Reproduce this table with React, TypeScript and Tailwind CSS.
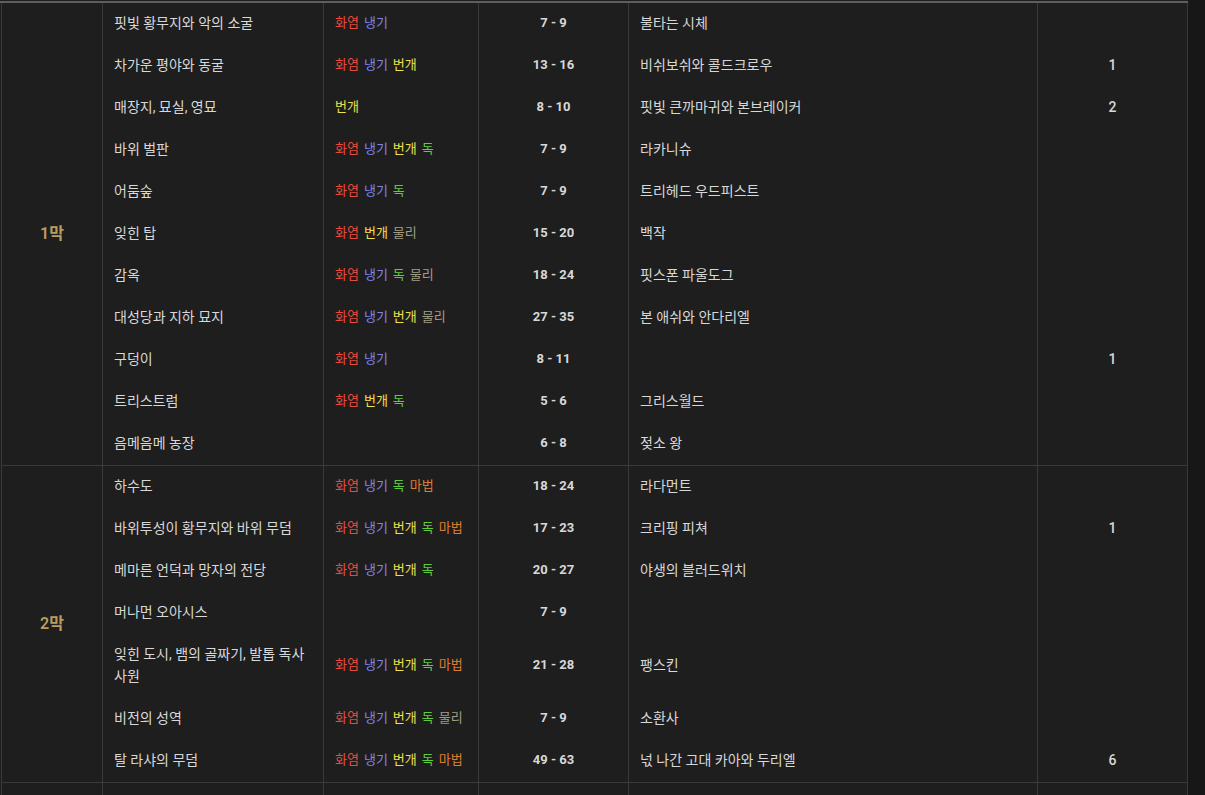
import React from "react";

type Row = { name: string; el: string[]; lv: string; boss: string; n: string };

const EL: Record<string, string> = {
  화염: "text-[#ea4a3c]",
  냉기: "text-[#7f86ea]",
  번개: "text-[#f4e04e]",
  독: "text-[#5fcc3c]",
  마법: "text-[#de7c2e]",
  물리: "text-[#a29c86]",
};

const g1: Row[] = [
  { name: "핏빛 황무지와 악의 소굴", el: ["화염", "냉기"], lv: "7 - 9", boss: "불타는 시체", n: "" },
  { name: "차가운 평야와 동굴", el: ["화염", "냉기", "번개"], lv: "13 - 16", boss: "비쉬보쉬와 콜드크로우", n: "1" },
  { name: "매장지, 묘실, 영묘", el: ["번개"], lv: "8 - 10", boss: "핏빛 큰까마귀와 본브레이커", n: "2" },
  { name: "바위 벌판", el: ["화염", "냉기", "번개", "독"], lv: "7 - 9", boss: "라카니슈", n: "" },
  { name: "어둠숲", el: ["화염", "냉기", "독"], lv: "7 - 9", boss: "트리헤드 우드피스트", n: "" },
  { name: "잊힌 탑", el: ["화염", "번개", "물리"], lv: "15 - 20", boss: "백작", n: "" },
  { name: "감옥", el: ["화염", "냉기", "독", "물리"], lv: "18 - 24", boss: "핏스폰 파울도그", n: "" },
  { name: "대성당과 지하 묘지", el: ["화염", "냉기", "번개", "물리"], lv: "27 - 35", boss: "본 애쉬와 안다리엘", n: "" },
  { name: "구덩이", el: ["화염", "냉기"], lv: "8 - 11", boss: "", n: "1" },
  { name: "트리스트럼", el: ["화염", "번개", "독"], lv: "5 - 6", boss: "그리스월드", n: "" },
  { name: "음메음메 농장", el: [], lv: "6 - 8", boss: "젖소 왕", n: "" },
];

const g2: Row[] = [
  { name: "하수도", el: ["화염", "냉기", "독", "마법"], lv: "18 - 24", boss: "라다먼트", n: "" },
  { name: "바위투성이 황무지와 바위 무덤", el: ["화염", "냉기", "번개", "독", "마법"], lv: "17 - 23", boss: "크리핑 피쳐", n: "1" },
  { name: "메마른 언덕과 망자의 전당", el: ["화염", "냉기", "번개", "독"], lv: "20 - 27", boss: "야생의 블러드위치", n: "" },
  { name: "머나먼 오아시스", el: [], lv: "7 - 9", boss: "", n: "" },
  { name: "잊힌 도시, 뱀의 골짜기, 발톱 독사 사원", el: ["화염", "냉기", "번개", "독", "마법"], lv: "21 - 28", boss: "팽스킨", n: "" },
  { name: "비전의 성역", el: ["화염", "냉기", "번개", "독", "물리"], lv: "7 - 9", boss: "소환사", n: "" },
  { name: "탈 라샤의 무덤", el: ["화염", "냉기", "번개", "독", "마법"], lv: "49 - 63", boss: "넋 나간 고대 카아와 두리엘", n: "6" },
];

const FONT = { fontFamily: "Roboto, 'Noto Sans CJK KR', sans-serif" };

function Group({ act, rows }: { act: string; rows: Row[] }) {
  return (
    <>
      {rows.map((r, i) => {
        const last = i === rows.length - 1;
        const b = last ? "border-b border-b-[#3a3a3a]" : "";
        return (
          <tr key={i}>
            {i === 0 && (
              <td
                rowSpan={rows.length}
                className="border-x border-[#3a3a3a] border-b border-b-[#3a3a3a] text-center align-middle text-[16px] font-semibold text-[#b99d5f]"
              >
                {act}
              </td>
            )}
            <td className={`border-x border-[#3a3a3a] ${b} pl-[11px] pr-[2px] pt-[9px] pb-[11px] text-[14px] leading-[22px] text-[#d8d8d8] align-middle break-keep`}>
              {r.name}
            </td>
            <td className={`border-x border-[#3a3a3a] ${b} pl-[11px] pt-[9px] pb-[11px] text-[13px] leading-[22px] align-middle`}>
              <div className="flex gap-[5px]">
                {r.el.map((e) => (
                  <span key={e} className={EL[e]}>
                    {e}
                  </span>
                ))}
              </div>
            </td>
            <td className={`border-x border-[#3a3a3a] ${b} pt-[9px] pb-[11px] leading-[22px] text-center text-[13px] font-bold text-[#d8d8d8] align-middle`}>
              {r.lv}
            </td>
            <td className={`border-x border-[#3a3a3a] ${b} pl-[11px] pt-[9px] pb-[11px] leading-[22px] text-[14px] text-[#d8d8d8] align-middle`}>
              {r.boss}
            </td>
            <td className={`border-x border-[#3a3a3a] ${b} pt-[9px] pb-[11px] leading-[22px] text-center text-[14px] font-medium text-[#d8d8d8] align-middle`}>
              {r.n}
            </td>
          </tr>
        );
      })}
    </>
  );
}

export default function App() {
  return (
    <div className="flex h-[795px] w-[1205px] overflow-hidden bg-[#171717]" style={FONT}>
      <div className="w-[1188px] shrink-0 bg-[#1e1e1e] pt-[1px]">
        <div className="h-[2px] bg-[#5e5e5e]" />
        <table className="table-fixed border-collapse ml-[1px] w-[1187px]">
          <colgroup>
            <col className="w-[101px]" />
            <col className="w-[221px]" />
            <col className="w-[155px]" />
            <col className="w-[150px]" />
            <col className="w-[409px]" />
            <col className="w-[150px]" />
          </colgroup>
          <tbody>
            <Group act="1막" rows={g1} />
            <Group act="2막" rows={g2} />
            <tr>
              <td className="border-x border-[#3a3a3a] h-[42px]" />
              <td className="border-x border-[#3a3a3a]" />
              <td className="border-x border-[#3a3a3a]" />
              <td className="border-x border-[#3a3a3a]" />
              <td className="border-x border-[#3a3a3a]" />
              <td className="border-x border-[#3a3a3a]" />
            </tr>
          </tbody>
        </table>
      </div>
    </div>
  );
}
